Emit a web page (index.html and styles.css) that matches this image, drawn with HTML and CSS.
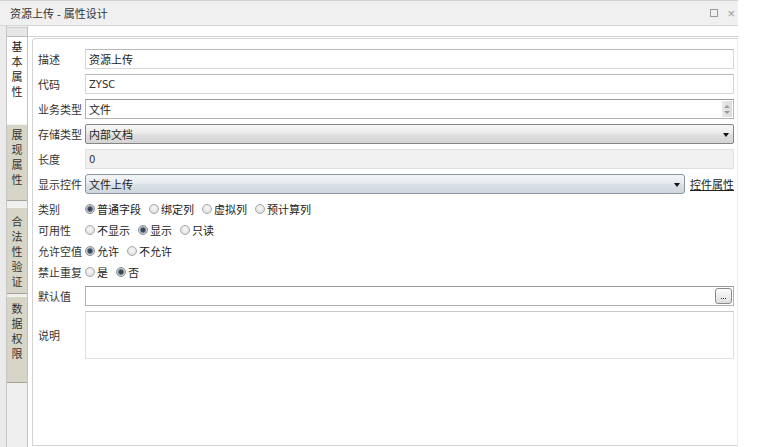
FILE: index.html
```html
<!DOCTYPE html>
<html lang="zh-CN">

<head>
    <meta charset="UTF-8" />
    <title>资源上传 - 属性设计</title>
    <link rel="stylesheet" href="styles.css">
</head>

<body>
    <div class="window">
        <div class="titlebar">
            <span class="title">资源上传 - 属性设计</span>
            <span class="btn-max"></span>
            <span class="btn-close">×</span>
        </div>

        <div class="frame">
            <div class="gutter"></div>

            <div class="tabs">
                <div class="tab-stub"></div>
                <div class="tab active">基<br>本<br>属<br>性</div>
                <div class="tab tab-view">展<br>现<br>属<br>性</div>
                <div class="tab tab-rule">合<br>法<br>性<br>验<br>证</div>
                <div class="tab tab-data">数<br>据<br>权<br>限</div>
            </div>

            <div class="main">
                <div class="main-top"></div>
                <div class="panel">
                    <div class="row">
                        <label>描述</label>
                        <div class="field">资源上传</div>
                    </div>
                    <div class="row">
                        <label>代码</label>
                        <div class="field latin">ZYSC</div>
                    </div>
                    <div class="row">
                        <label>业务类型</label>
                        <div class="field field-dark">
                            <span class="grow">文件</span>
                            <span class="spinner"><i class="up"></i><i class="down"></i></span>
                        </div>
                    </div>
                    <div class="row">
                        <label>存储类型</label>
                        <div class="select">
                            <span class="grow">内部文档</span>
                            <i class="arrow"></i>
                        </div>
                    </div>
                    <div class="row">
                        <label>长度</label>
                        <div class="field disabled latin">0</div>
                    </div>
                    <div class="row row-last">
                        <label>显示控件</label>
                        <div class="select select-blue">
                            <span class="grow">文件上传</span>
                            <i class="arrow"></i>
                        </div>
                        <a class="link">控件属性</a>
                    </div>

                    <div class="radio-row">
                        <label>类别</label>
                        <span class="radio on"></span><span class="opt">普通字段</span>
                        <span class="radio"></span><span class="opt">绑定列</span>
                        <span class="radio"></span><span class="opt">虚拟列</span>
                        <span class="radio"></span><span class="opt">预计算列</span>
                    </div>
                    <div class="radio-row">
                        <label>可用性</label>
                        <span class="radio"></span><span class="opt">不显示</span>
                        <span class="radio on"></span><span class="opt">显示</span>
                        <span class="radio"></span><span class="opt">只读</span>
                    </div>
                    <div class="radio-row">
                        <label>允许空值</label>
                        <span class="radio on"></span><span class="opt">允许</span>
                        <span class="radio"></span><span class="opt">不允许</span>
                    </div>
                    <div class="radio-row row-last">
                        <label>禁止重复</label>
                        <span class="radio"></span><span class="opt">是</span>
                        <span class="radio on"></span><span class="opt">否</span>
                    </div>

                    <div class="row">
                        <label>默认值</label>
                        <div class="field field-dark">
                            <span class="grow"></span>
                            <span class="dots-btn"><i></i><i></i><i></i></span>
                        </div>
                    </div>
                    <div class="row row-memo">
                        <label>说明</label>
                        <div class="memo"></div>
                    </div>
                </div>
            </div>
        </div>
    </div>
</body>

</html>
```

FILE: styles.css
```css
* {
    box-sizing: border-box;
}

body {
    margin: 0;
    background-color: #fff;
    font-family: "Liberation Sans", "Noto Sans CJK SC", sans-serif;
    font-size: 11px;
    color: #222;
}

.window {
    width: 738px;
    height: 447px;
    display: flex;
    flex-direction: column;
}

/* title bar */
.titlebar {
    height: 26px;
    flex: none;
    display: flex;
    align-items: center;
    padding: 0 3px 0 10px;
    background-color: #f0f0f0;
    border-top: 1px solid #d2d2d2;
    border-bottom: 1px solid #d6d6d6;
}

.title {
    flex: 1;
    color: #333;
}

.btn-max {
    width: 8px;
    height: 8px;
    border: 1px solid #9a9a9a;
    margin-right: 9px;
}

.btn-close {
    color: #9a9a9a;
    font-size: 13px;
    line-height: 1;
}

/* left side */
.frame {
    flex: 1;
    display: flex;
}

.gutter {
    width: 7px;
    background-color: #ebebeb;
    border-right: 1px solid #c6c6c6;
}

.tabs {
    width: 21px;
    display: flex;
    flex-direction: column;
    background-color: #efefef;
    border-right: 1px solid #c2c2c2;
}

.tab-stub {
    height: 10px;
    margin-top: 1px;
    background-color: #e6e6e6;
    border-top: 1px solid #d0d0d0;
    border-bottom: 1px solid #bdbdbd;
}

.tab {
    text-align: center;
    line-height: 15px;
    color: #333;
    background-color: #d7d5c7;
    border-top: 1px solid #f4f4ee;
    border-bottom: 1px solid #a5a497;
}

.tab.active {
    height: 87px;
    padding-top: 3px;
    background-color: #fff;
    border: none;
    color: #222;
}

.tab-view {
    height: 77px;
    padding-top: 3px;
}

.tab-rule {
    height: 87px;
    margin-top: 6px;
    padding-top: 7px;
}

.tab-data {
    height: 87px;
    margin-top: 2px;
    padding-top: 5px;
}

/* main panel */
.main {
    flex: 1;
    display: flex;
    flex-direction: column;
}

.main-top {
    height: 11px;
    border-bottom: 1px solid #cfcfcf;
}

.panel {
    flex: 1;
    margin: 1px 0 1px 4px;
    padding: 10px 3px 0 5px;
    border: 1px solid #d3d3d3;
    border-right-color: #ececec;
    border-radius: 4px 0 0 0;
}

.row {
    display: flex;
    align-items: center;
    height: 20px;
    margin-bottom: 5px;
}

.row.row-last {
    margin-bottom: 4px;
}

.radio-row.row-last {
    margin-bottom: 4px;
}

label {
    width: 47px;
    flex: none;
    color: #333;
}

.grow {
    flex: 1;
}

.field {
    flex: 1;
    height: 20px;
    display: flex;
    align-items: center;
    padding: 0 3px 0 3px;
    background-color: #fff;
    border: 1px solid #d6d6d6;
    border-top-color: #b9b9b9;
}

.field.field-dark {
    border-color: #b3b3b3;
    border-top-color: #999;
    padding-right: 1px;
}

.field.disabled {
    background-color: #f0f0f0;
    border-color: #e0e0e0;
}

.latin {
    font-family: "DejaVu Sans", "Liberation Sans", sans-serif;
    font-size: 10px;
    color: #333;
}

.spinner {
    width: 10px;
    height: 16px;
    display: flex;
    flex-direction: column;
    justify-content: center;
    align-items: center;
    gap: 3px;
    background: linear-gradient(to right, #e9e9e9, #dcdcdc);
}

.spinner i {
    width: 0;
    height: 0;
    border-left: 3px solid transparent;
    border-right: 3px solid transparent;
}

.spinner .up {
    border-bottom: 3px solid #9a9a9a;
}

.spinner .down {
    border-top: 3px solid #9a9a9a;
}

.select {
    flex: 1;
    height: 20px;
    display: flex;
    align-items: center;
    padding: 0 4px 0 3px;
    border: 1px solid #858585;
    border-radius: 2px;
    background: linear-gradient(#f6f6f6, #ebebeb 45%, #dedede 55%, #d4d4d4);
}

.select-blue {
    border-color: #8d97a1;
    border-radius: 3px;
    background: linear-gradient(#f3f6f8, #e6ebef 45%, #d9e0e6 55%, #cfd7de);
}

.arrow {
    width: 0;
    height: 0;
    margin-top: 2px;
    border-left: 3px solid transparent;
    border-right: 3px solid transparent;
    border-top: 4px solid #111;
}

.link {
    margin-left: 5px;
    color: #222;
    text-decoration: underline;
}

/* radios */
.radio-row {
    display: flex;
    align-items: center;
    height: 21px;
}

.radio {
    width: 10px;
    height: 10px;
    flex: none;
    margin-right: 2px;
    border-radius: 50%;
    border: 1px solid #a8a8a8;
    background: radial-gradient(circle at 50% 40%, #fafafa, #d6d6d6);
}

.radio.on {
    border-color: #8c8c8c;
    background: radial-gradient(circle, #2d3b4c 0, #3f4f62 2px, #9eacba 3px, #e4e4e4 4px);
}

.opt {
    margin-right: 8px;
    color: #222;
}

/* default value button */
.dots-btn {
    width: 17px;
    height: 16px;
    display: flex;
    align-items: flex-end;
    justify-content: center;
    gap: 1px;
    padding-bottom: 4px;
    border: 1px solid #8a8a8a;
    border-radius: 3px;
    background: linear-gradient(#fdfdfd, #dedede);
}

.dots-btn i {
    width: 1px;
    height: 1px;
    background-color: #333;
}

.row-memo {
    height: 48px;
}

.memo {
    flex: 1;
    height: 48px;
    border: 1px solid #e0e0e0;
    border-top-color: #c9c9c9;
}
```
